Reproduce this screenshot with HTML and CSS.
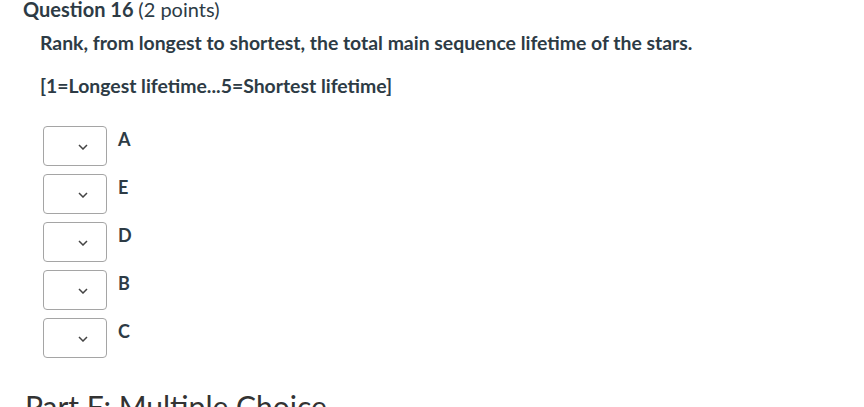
FILE: index.html
```html
<!DOCTYPE html>
<html>
<head>
<meta charset="utf-8">
<link rel="stylesheet" href="styles.css">
</head>
<body>
<div class="page">
  <h2 class="qtitle">Question 16 <span class="pts">(2 points)</span></h2>
  <div class="qbody">
    <p class="qtext">Rank, from longest to shortest, the total main sequence lifetime of the stars.</p>
    <p class="qtext">[1=Longest lifetime...5=Shortest lifetime]</p>
    <div class="ranks">
      <div class="rank"><div class="sel"><svg class="chev" width="10" height="6" viewBox="0 0 10 6"><path d="M1 1 L5 5 L9 1" fill="none" stroke="#444" stroke-width="1.5"/></svg></div><span class="lbl">A</span></div>
      <div class="rank"><div class="sel"><svg class="chev" width="10" height="6" viewBox="0 0 10 6"><path d="M1 1 L5 5 L9 1" fill="none" stroke="#444" stroke-width="1.5"/></svg></div><span class="lbl">E</span></div>
      <div class="rank"><div class="sel"><svg class="chev" width="10" height="6" viewBox="0 0 10 6"><path d="M1 1 L5 5 L9 1" fill="none" stroke="#444" stroke-width="1.5"/></svg></div><span class="lbl">D</span></div>
      <div class="rank"><div class="sel"><svg class="chev" width="10" height="6" viewBox="0 0 10 6"><path d="M1 1 L5 5 L9 1" fill="none" stroke="#444" stroke-width="1.5"/></svg></div><span class="lbl">B</span></div>
      <div class="rank"><div class="sel"><svg class="chev" width="10" height="6" viewBox="0 0 10 6"><path d="M1 1 L5 5 L9 1" fill="none" stroke="#444" stroke-width="1.5"/></svg></div><span class="lbl">C</span></div>
    </div>
  </div>
  <h2 class="part">Part F: Multiple Choice</h2>
</div>
</body>
</html>
```
FILE: styles.css
```css
html, body {
  margin: 0;
  padding: 0;
  background: #fff;
}
body {
  font-family: Lato, "Open Sans", sans-serif;
  color: #2d3b45;
  overflow: hidden;
  height: 407px;
}
.page {
  padding: 0 0 0 23px;
}
.qtitle {
  margin: 0;
  font-size: 20px;
  line-height: 18px;
  font-weight: 700;
}
.pts {
  font-weight: 400;
}
.qbody {
  padding-left: 17px;
  padding-top: 14px;
}
.qtext {
  margin: 0 0 21px 0;
  font-size: 19.4px;
  line-height: 22px;
  font-weight: 700;
}
.ranks {
  display: flex;
  flex-direction: column;
  gap: 8px;
  padding-left: 3px;
  margin-top: 29px;
}
.rank {
  display: flex;
  align-items: flex-start;
  gap: 11px;
}
.sel {
  box-sizing: border-box;
  width: 64px;
  height: 40px;
  border: 1px solid #a5a5a5;
  border-radius: 4px;
  display: flex;
  align-items: center;
  justify-content: flex-end;
  padding-right: 18px;
}
.chev {
  display: block;
  margin-top: 2px;
}
.lbl {
  font-size: 18px;
  font-weight: 700;
  line-height: 18px;
  padding-top: 4px;
}
.part {
  margin: 31px 0 0 2px;
  font-size: 30px;
  line-height: 34px;
  font-weight: 400;
  color: #333;
}
```
